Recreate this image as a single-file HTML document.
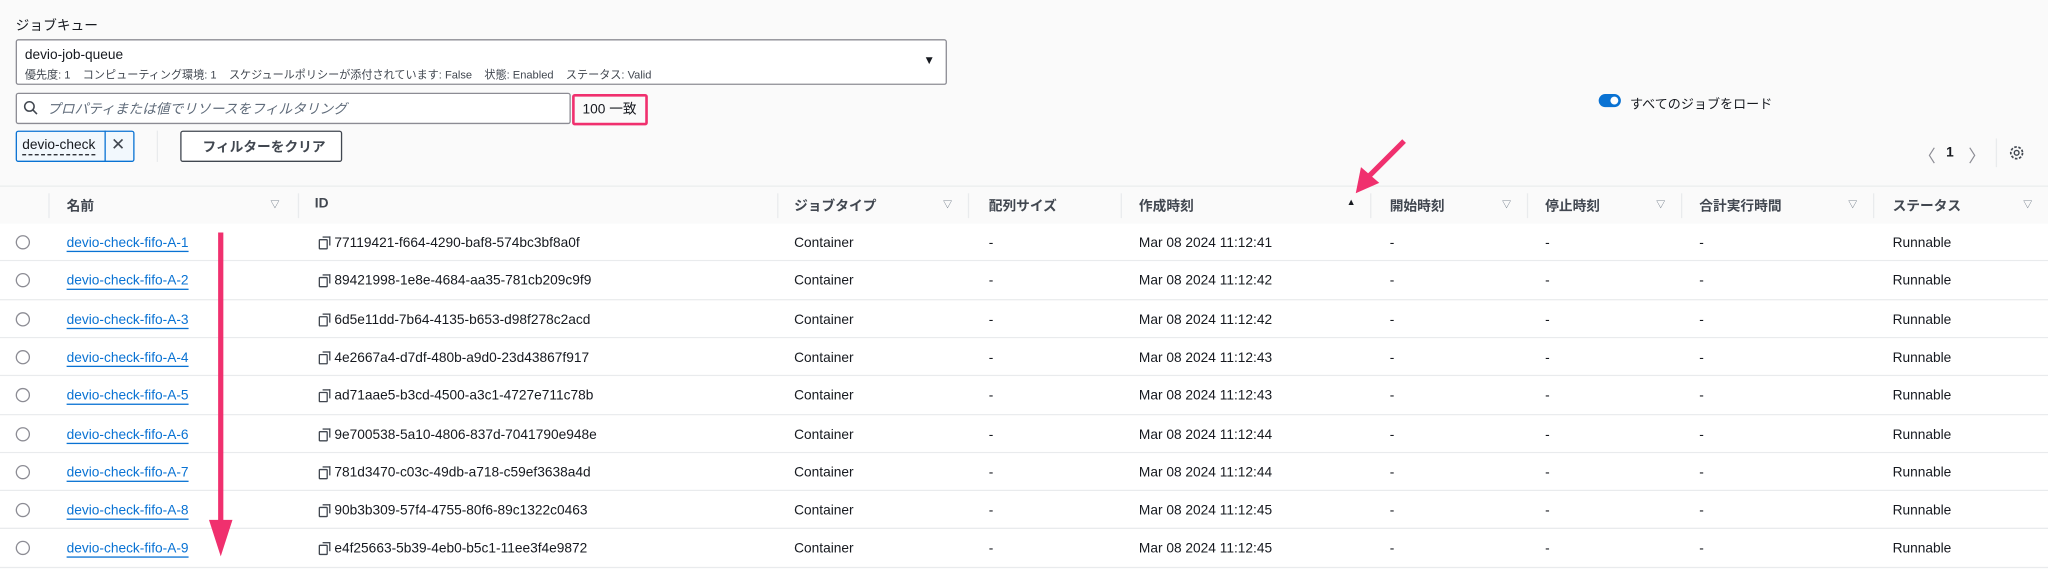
<!DOCTYPE html>
<html><head><meta charset="utf-8"><style>
html,body{margin:0;padding:0;width:2048px;height:569px;overflow:hidden;background:#fff}
#w{position:absolute;left:0;top:0;width:1568px;height:436px;transform:scale(1.30612);transform-origin:0 0;font-family:"Liberation Sans","Noto Sans CJK JP",sans-serif;color:#16191f;font-size:10.5px}
.a{position:absolute;white-space:nowrap}
.top{position:absolute;left:0;top:0;width:1568px;height:142px;background:#fafafa}
.hdr{position:absolute;left:0;top:142px;width:1568px;height:28px;background:#fafafa;border-top:1px solid #eaeded;border-bottom:1px solid #e9ebed}
.hdr .a{top:7px;font-weight:bold;color:#414750}
.sep{position:absolute;top:5px;width:1px;height:19px;background:#e9ebed}
.tri{position:absolute;top:9px;font-size:7px;color:#5f6b7a}
.row{position:absolute;left:0;width:1568px;height:28px;border-bottom:1px solid #e9ebed;background:#fff}
.row .a{top:9px}
.rad{position:absolute;left:12px;top:9px;width:9px;height:9px;border:1px solid #8c8c94;border-radius:50%}
.lk{color:#0972d3;text-decoration:underline;text-underline-offset:3px}
.cp{display:inline-block;width:8px;height:9px;position:relative;margin-right:4px;vertical-align:-1px}
.cp:before{content:"";position:absolute;left:0;top:2px;width:5px;height:6px;border:1px solid #414750;border-radius:1px}
.cp:after{content:"";position:absolute;left:3px;top:0;width:5px;height:6px;border-top:1px solid #414750;border-right:1px solid #414750}
</style></head><body><div id="w">
<div class="top"></div>
<div class="a" style="left:12px;top:12px;font-size:10.5px">ジョブキュー</div>
<div class="a" style="left:12px;top:30px;width:711px;height:33px;border:1px solid #8c8c94;border-radius:2px;background:#fff"></div>
<div class="a" style="left:19px;top:36px;font-size:10.5px">devio-job-queue</div>
<div class="a" style="left:19px;top:51px;font-size:8.5px;color:#414750">優先度: 1&nbsp;&nbsp;&nbsp; コンピューティング環境: 1&nbsp;&nbsp;&nbsp; スケジュールポリシーが添付されています: False&nbsp;&nbsp;&nbsp; 状態: Enabled&nbsp;&nbsp;&nbsp; ステータス: Valid</div>
<div class="a" style="left:707px;top:41px;font-size:9px">▼</div>
<div class="a" style="left:12px;top:71px;width:423px;height:22px;border:1px solid #8c8c94;border-radius:2px;background:#fff"></div>
<svg class="a" style="left:18px;top:77px" width="11" height="11" viewBox="0 0 11 11"><circle cx="4.5" cy="4.5" r="3.6" fill="none" stroke="#414750" stroke-width="1.2"/><path d="M7.2 7.2L10.3 10.3" stroke="#414750" stroke-width="1.2"/></svg>
<div class="a" style="left:36px;top:76px;font-style:italic;color:#5f6b7a">プロパティまたは値でリソースをフィルタリング</div>
<div class="a" style="left:438px;top:72px;width:54px;height:20px;border:2px solid #f0306e;border-radius:2px"></div>
<div class="a" style="left:446px;top:76px">100 一致</div>
<div class="a" style="left:12px;top:100px;width:89px;height:22px;border:1px solid #0972d3;border-radius:2px;background:#f2f8fd"></div>
<div class="a" style="left:80px;top:100px;width:1px;height:24px;background:#0972d3"></div>
<div class="a" style="left:17px;top:105px;border-bottom:1px dashed #16191f;line-height:13px">devio-check</div>
<div class="a" style="left:85px;top:103px;font-size:13px;color:#414750">✕</div>
<div class="a" style="left:120px;top:100px;width:1px;height:24px;background:#e9ebed"></div>
<div class="a" style="left:138px;top:100px;width:122px;height:22px;border:1px solid #414750;border-radius:2px;background:#fff"></div>
<div class="a" style="left:155px;top:105px;font-weight:bold;color:#414750">フィルターをクリア</div>
<div class="a" style="left:1224px;top:72px;width:17px;height:10px;border-radius:5px;background:#0972d3"></div>
<div class="a" style="left:1233px;top:74px;width:6px;height:6px;border-radius:50%;background:#fff"></div>
<div class="a" style="left:1248px;top:71px;font-size:10px">すべてのジョブをロード</div>
<div class="a" style="left:1469px;top:109px;color:#8c8c94;font-size:13px">〈</div>
<div class="a" style="left:1490px;top:111px;font-weight:bold">1</div>
<div class="a" style="left:1507px;top:109px;color:#8c8c94;font-size:13px">〉</div>
<div class="a" style="left:1528px;top:106px;width:1px;height:22px;background:#e9ebed"></div>
<svg class="a" style="left:1538px;top:111px" width="12" height="12" viewBox="0 0 12 12"><circle cx="6" cy="6" r="4.5" fill="none" stroke="#414750" stroke-width="1.3" stroke-dasharray="2 1.2"/><circle cx="6" cy="6" r="1.8" fill="none" stroke="#414750" stroke-width="1.1"/></svg>
<div class="hdr">
<div class="sep" style="left:37px"></div><div class="a" style="left:51px">名前</div><div class="tri" style="left:207px">▽</div>
<div class="sep" style="left:228px"></div><div class="a" style="left:241px">ID</div>
<div class="sep" style="left:595px"></div><div class="a" style="left:608px">ジョブタイプ</div><div class="tri" style="left:722px">▽</div>
<div class="sep" style="left:741px"></div><div class="a" style="left:757px">配列サイズ</div>
<div class="sep" style="left:858px"></div><div class="a" style="left:872px">作成時刻</div><div class="tri" style="left:1031px;color:#16191f">▲</div>
<div class="sep" style="left:1049px"></div><div class="a" style="left:1064px">開始時刻</div><div class="tri" style="left:1150px">▽</div>
<div class="sep" style="left:1169px"></div><div class="a" style="left:1183px">停止時刻</div><div class="tri" style="left:1268px">▽</div>
<div class="sep" style="left:1287px"></div><div class="a" style="left:1301px">合計実行時間</div><div class="tri" style="left:1415px">▽</div>
<div class="sep" style="left:1434px"></div><div class="a" style="left:1449px">ステータス</div><div class="tri" style="left:1549px">▽</div>
</div>
<div id="rows"></div>
<svg class="a" style="left:0;top:0" width="1568" height="436"><path d="M169 178L169 402" stroke="#f0306e" stroke-width="4"/><path d="M160 398L178 398L169 426Z" fill="#f0306e"/><path d="M1075 108L1047 136" stroke="#f0306e" stroke-width="4"/><path d="M1038 148L1042 128L1056 140Z" fill="#f0306e"/></svg>
</div>
<script>
var ids=["77119421-f664-4290-baf8-574bc3bf8a0f","89421998-1e8e-4684-aa35-781cb209c9f9","6d5e11dd-7b64-4135-b653-d98f278c2acd","4e2667a4-d7df-480b-a9d0-23d43867f917","ad71aae5-b3cd-4500-a3c1-4727e711c78b","9e700538-5a10-4806-837d-7041790e948e","781d3470-c03c-49db-a718-c59ef3638a4d","90b3b309-57f4-4755-80f6-89c1322c0463","e4f25663-5b39-4eb0-b5c1-11ee3f4e9872"];
var t=["41","42","42","43","43","44","44","45","45"],h="";
for(var i=0;i<9;i++){h+='<div class="row" style="top:'+Math.round(171+i*29.3)+'px;height:'+(Math.round(171+(i+1)*29.3)-Math.round(171+i*29.3)-1)+'px"><div class="rad"></div><div class="a lk" style="left:51px">devio-check-fifo-A-'+(i+1)+'</div><div class="a" style="left:244px"><span class="cp"></span>'+ids[i]+'</div><div class="a" style="left:608px">Container</div><div class="a" style="left:757px">-</div><div class="a" style="left:872px">Mar 08 2024 11:12:'+t[i]+'</div><div class="a" style="left:1064px">-</div><div class="a" style="left:1183px">-</div><div class="a" style="left:1301px">-</div><div class="a" style="left:1449px">Runnable</div></div>';}
document.getElementById("rows").innerHTML=h;
</script>
</body></html>
